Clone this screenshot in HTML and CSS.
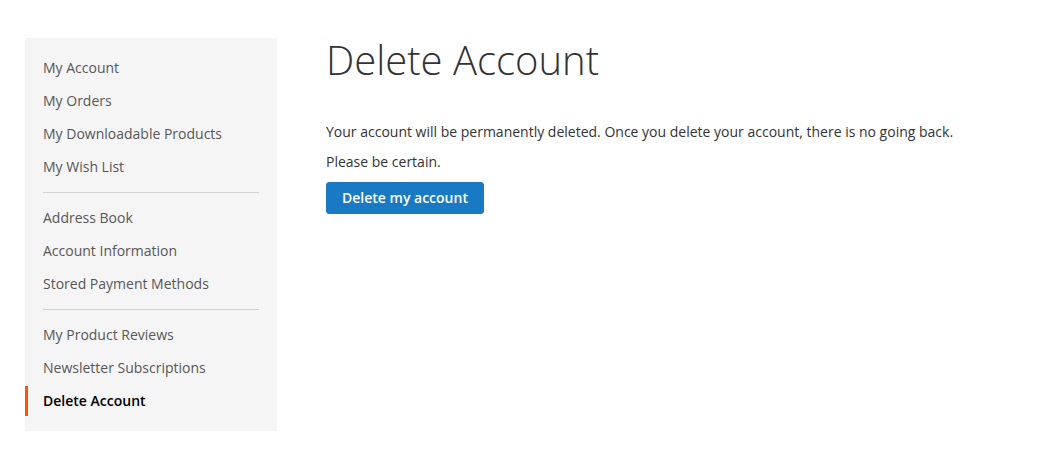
FILE: index.html
```html
<!DOCTYPE html>
<html lang="en">
<head>
<meta charset="utf-8">
<title>Delete Account</title>
<link rel="stylesheet" href="styles.css">
</head>
<body>
<div class="page">
  <aside class="sidebar">
    <ul class="nav">
      <li class="item"><a href="#">My Account</a></li>
      <li class="item"><a href="#">My Orders</a></li>
      <li class="item"><a href="#">My Downloadable Products</a></li>
      <li class="item"><a href="#">My Wish List</a></li>
      <li class="item"><span class="delimiter"></span></li>
      <li class="item"><a href="#">Address Book</a></li>
      <li class="item"><a href="#">Account Information</a></li>
      <li class="item"><a href="#">Stored Payment Methods</a></li>
      <li class="item"><span class="delimiter"></span></li>
      <li class="item"><a href="#">My Product Reviews</a></li>
      <li class="item"><a href="#">Newsletter Subscriptions</a></li>
      <li class="item current"><strong>Delete Account</strong></li>
    </ul>
  </aside>
  <main class="main">
    <h1 class="page-title">Delete Account</h1>
    <p class="text">Your account will be permanently deleted. Once you delete your account, there is no going back.</p>
    <p class="text">Please be certain.</p>
    <button class="btn-primary" type="button">Delete my account</button>
  </main>
</div>
</body>
</html>
```
FILE: styles.css
```css
html, body {
  margin: 0;
  padding: 0;
  background: #fff;
}
body {
  font-family: "Open Sans", "Liberation Sans", sans-serif;
  font-size: 14px;
  line-height: 20px;
  color: #333;
}
.page {
  display: flex;
  align-items: flex-start;
  padding: 38px 0 0 25px;
}
.sidebar {
  width: 252px;
  flex: none;
  background: #f5f5f5;
  padding: 15px 0;
}
.nav {
  list-style: none;
  margin: 0;
  padding: 0;
}
.item {
  margin: 3px 0 0;
}
.item:first-child {
  margin-top: 0;
}
.item a,
.item strong {
  display: block;
  border-left: 3px solid transparent;
  padding: 5px 18px 5px 15px;
  color: #575757;
  text-decoration: none;
}
.item.current strong {
  border-left-color: #ff5501;
  color: #000;
  font-weight: 600;
}
.delimiter {
  display: block;
  border-top: 1px solid #d1d1d1;
  margin: 10px 18px;
}
.main {
  margin-left: 49px;
  flex: 1;
}
.page-title {
  margin: 0 0 40px;
  font-size: 40px;
  line-height: 44px;
  font-weight: 300;
  color: #333;
}
.text {
  margin: 0 0 10px;
}
.btn-primary {
  display: inline-block;
  margin-top: 0;
  background: #1979c3;
  border: 1px solid #1979c3;
  color: #fff;
  font-family: inherit;
  font-size: 14px;
  line-height: 16px;
  font-weight: 600;
  padding: 7px 15px;
  border-radius: 3px;
  cursor: pointer;
}
```
